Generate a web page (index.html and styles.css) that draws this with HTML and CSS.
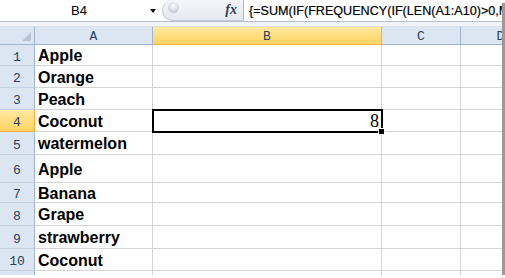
FILE: index.html
```html
<!DOCTYPE html>
<html lang="en">
<head>
<meta charset="UTF-8">
<title>Sheet1</title>
<link rel="stylesheet" href="styles.css">
</head>
<body>
<div class="window">
    <div class="formula-bar">
        <div class="name-box">
            <span class="name">B4</span>
            <span class="arrow"></span>
        </div>
        <div class="fx-box">
            <span class="grip"></span>
            <span class="fx">fx</span>
        </div>
        <div class="formula">{=SUM(IF(FREQUENCY(IF(LEN(A1:A10)&gt;0,MATCH(A1:A10,A1:A10,0),""),IF(LEN(A1:A10)&gt;0,MATCH(A1:A10,A1:A10,0),""))&gt;0,1))}</div>
    </div>
    <div class="gap"></div>
    <div class="sheet">
        <div class="hd corner"><span class="tri"></span></div>
        <div class="hd col">A</div>
        <div class="hd col on">B</div>
        <div class="hd col">C</div>
        <div class="hd col">D</div>

        <div class="hd row">1</div><div class="c txt">Apple</div><div class="c"></div><div class="c"></div><div class="c"></div>
        <div class="hd row">2</div><div class="c txt">Orange</div><div class="c"></div><div class="c"></div><div class="c"></div>
        <div class="hd row">3</div><div class="c txt">Peach</div><div class="c"></div><div class="c"></div><div class="c"></div>
        <div class="hd row on">4</div><div class="c txt">Coconut</div><div class="c sel"><span class="val">8</span></div><div class="c"></div><div class="c"></div>
        <div class="hd row">5</div><div class="c txt">watermelon</div><div class="c"></div><div class="c"></div><div class="c"></div>
        <div class="hd row">6</div><div class="c txt">Apple</div><div class="c"></div><div class="c"></div><div class="c"></div>
        <div class="hd row">7</div><div class="c txt">Banana</div><div class="c"></div><div class="c"></div><div class="c"></div>
        <div class="hd row">8</div><div class="c txt">Grape</div><div class="c"></div><div class="c"></div><div class="c"></div>
        <div class="hd row">9</div><div class="c txt">strawberry</div><div class="c"></div><div class="c"></div><div class="c"></div>
        <div class="hd row">10</div><div class="c txt">Coconut</div><div class="c"></div><div class="c"></div><div class="c"></div>
        <div class="hd row"></div><div class="c"></div><div class="c"></div><div class="c"></div><div class="c"></div>
    </div>
</div>
</body>
</html>
```
FILE: styles.css
```css
* {
    box-sizing: border-box;
}
body {
    margin: 0;
    background: #fff;
    font-family: "Liberation Sans", Arial, sans-serif;
}
.window {
    width: 502px;
    height: 275px;
    overflow: hidden;
    background: #fff;
    box-shadow: 3px 3px 1px #9a9a9a;
}
.formula-bar {
    display: flex;
    height: 22px;
    border-bottom: 1px solid #b8c0cc;
    background: #fff;
}
.name-box {
    width: 162px;
    display: flex;
    align-items: center;
    padding-right: 6px;
}
.name {
    flex: 1;
    text-align: center;
    font-size: 13px;
    padding-left: 8px;
    color: #000;
}
.arrow {
    width: 0;
    height: 0;
    border-left: 3px solid transparent;
    border-right: 3px solid transparent;
    border-top: 4px solid #111;
    margin-top: 1px;
}
.fx-box {
    width: 82px;
    height: 21px;
    display: flex;
    align-items: center;
    justify-content: space-between;
    padding: 0 4px 0 4px;
    border: 1px solid #c4ccd8;
    border-right: 1px solid #b0b8c4;
    border-top: 0;
    border-radius: 11px 0 0 11px;
    background: linear-gradient(#f4f6f9, #e4e9f0);
}
.grip {
    width: 11px;
    height: 11px;
    border-radius: 50%;
    background: radial-gradient(circle at 50% 35%, #fdfdfd, #c9ced6 70%, #b5bcc6);
    margin-top: -5px;
    margin-left: 1px;
}
.fx {
    font-family: "Liberation Serif", serif;
    font-style: italic;
    font-weight: bold;
    font-size: 14px;
    color: #2d3f58;
    margin-right: 2px;
}
.formula {
    flex: 1;
    white-space: nowrap;
    overflow: hidden;
    font-size: 12.6px;
    padding: 4px 0 0 5px;
    color: #000;
    -webkit-text-stroke: 0.2px #000;
}
.gap {
    height: 5px;
    background: #f1f4f8;
    border-bottom: 1px solid #dbe1e9;
}
.sheet {
    display: grid;
    grid-template-columns: 35px 118px 229px 79px 80px;
    grid-template-rows: 18px 21px 22px 22px 22px 23px 28px 20px 23px 23px 22px 20px;
}
.hd {
    background: #dce6f3;
    color: #27415f;
    font-family: "Liberation Mono", monospace;
    font-size: 13px;
    display: flex;
    align-items: center;
    justify-content: center;
    border-right: 1px solid #9eb6ce;
    border-bottom: 1px solid #9eb6ce;
}
.hd.row {
    border-bottom: 1px solid #c5d2e3;
    padding-top: 4px;
}
.hd.col {
    padding-top: 2px;
}
.hd.on {
    background: linear-gradient(#ffe9a2, #ffd360);
    border-right-color: #f2b045;
    border-bottom-color: #f2b045;
}
.hd.row.on {
    border-right-color: #f2b045;
    border-bottom-color: #f2b045;
}
.corner {
    position: relative;
}
.tri {
    position: absolute;
    right: 3px;
    bottom: 3px;
    width: 0;
    height: 0;
    border-left: 9px solid transparent;
    border-bottom: 9px solid #b6c4d6;
}
.c {
    border-right: 1px solid #d4d4d4;
    border-bottom: 1px solid #d4d4d4;
    display: flex;
    align-items: center;
}
.txt {
    font-weight: bold;
    font-size: 16px;
    padding: 2px 0 0 3px;
    color: #000;
}
.sel {
    position: relative;
    outline: 2px solid #000;
    outline-offset: -1px;
    justify-content: flex-end;
    padding-right: 2px;
}
.sel::after {
    content: "";
    position: absolute;
    right: -4px;
    bottom: -4px;
    width: 5px;
    height: 5px;
    background: #000;
    border: 1px solid #fff;
}
.val {
    font-family: "Liberation Serif", serif;
    font-size: 18px;
    padding-top: 2px;
}
```
